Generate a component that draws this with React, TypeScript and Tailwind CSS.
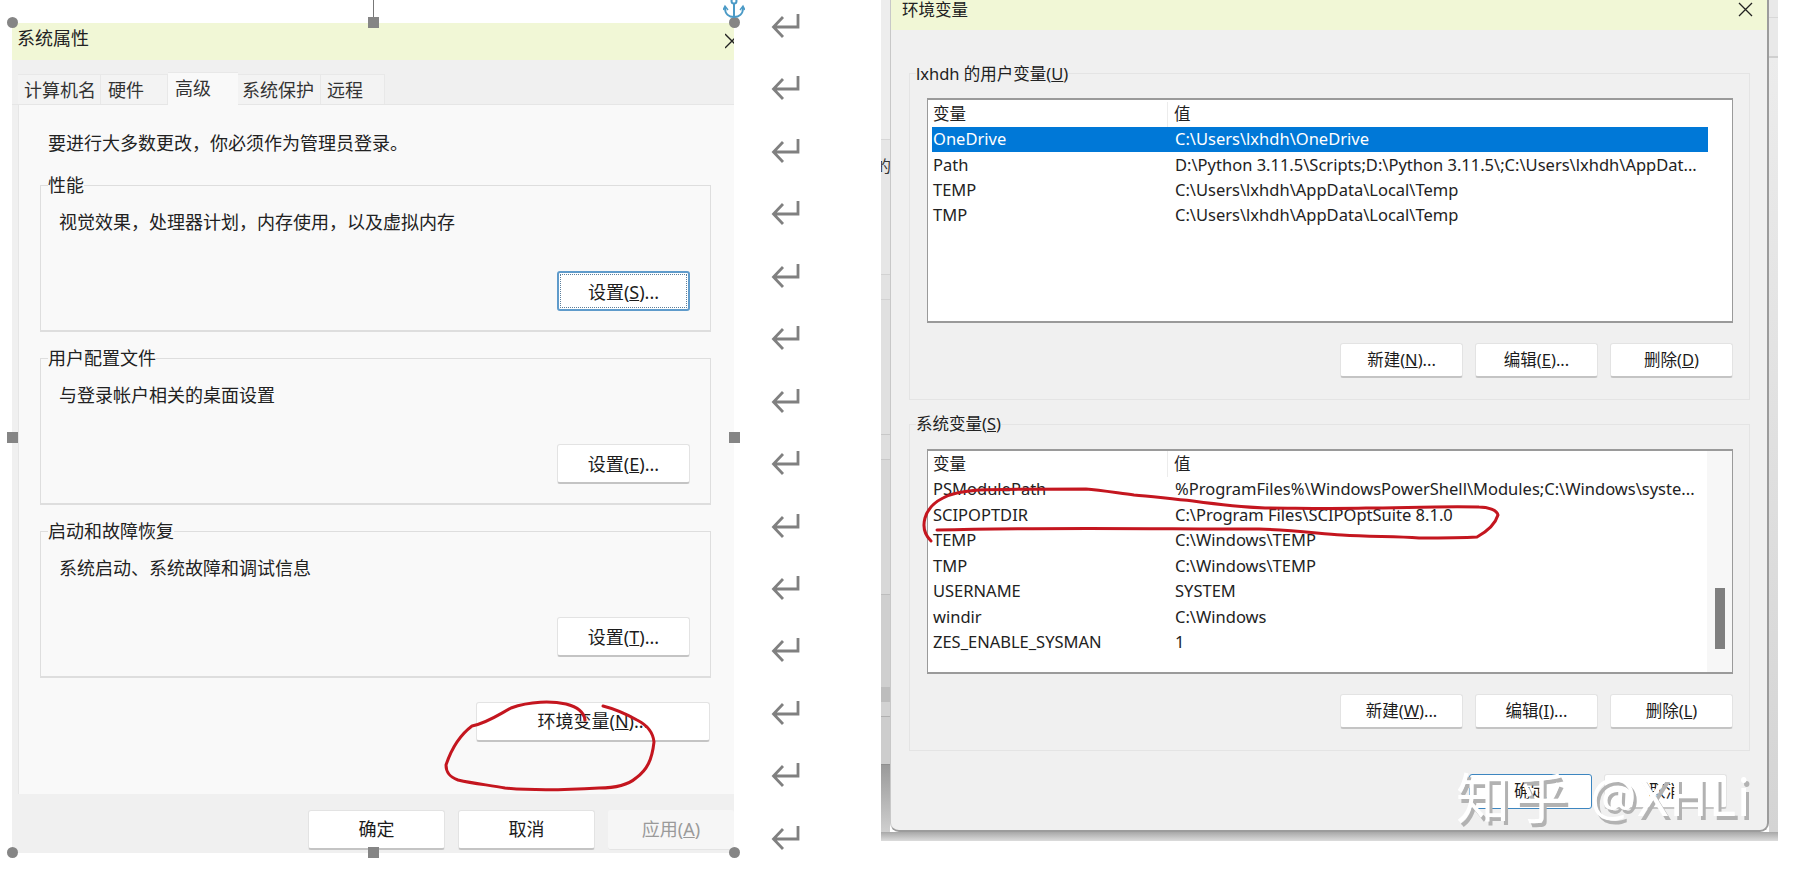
import React from "react";

const FONT = "font-['Noto_Sans','Noto_Sans_CJK_SC',sans-serif]";
const PLAIN_EDGE = "border border-[#e3e3e3] border-b-[#c4c4c4] border-b-2";

function Btn({ children, edge = PLAIN_EDGE, className = "" }: { children: React.ReactNode; edge?: string; className?: string }) {
  return (
    <div className={`flex items-center justify-center rounded-[3px] bg-white text-[#1c1c1c] ${edge} ${className}`}>
      <span>{children}</span>
    </div>
  );
}

function LeftGroup({ legend, desc, k, focus, className = "" }: { legend: string; desc: string; k: string; focus?: boolean; className?: string }) {
  return (
    <div className={`relative h-[147px] w-[671px] border border-[#dedede] border-b-2 flex flex-col justify-between pl-[18px] pr-[20px] pt-[24px] pb-[19px] ${className}`}>
      <span className="absolute left-[7px] top-[-13px] bg-[#f9f9f9] h-[24px] leading-[24px] text-[18px] text-[#222]">{legend}</span>
      <div className="leading-[24px] text-[#222]">{desc}</div>
      <Btn
        edge={focus ? "border-2 border-[#5f9bcb] outline-1 outline-dotted outline-[#5c7f9c] outline-offset-[-4px]" : PLAIN_EDGE}
        className="self-end w-[133px] h-[40px] pt-[2px]"
      >
        设置(<u>{k}</u>)...
      </Btn>
    </div>
  );
}

function Handle({ round, className }: { round?: boolean; className: string }) {
  return <div className={`absolute w-[11px] h-[11px] bg-[#858585] ${round ? "rounded-full" : ""} ${className}`} />;
}

function LeftDialog() {
  const tabs: [string, string, string][] = [
    ["计算机名", "w-[83px]", "pl-[6px]"],
    ["硬件", "w-[67px]", "pl-[7px]"],
  ];
  return (
    <div className="relative w-[722px] h-[830px] bg-[#f0f0f0] flex flex-col text-[18px]">
      <div className="h-[37px] bg-[#f1f7d6] flex items-center justify-between pl-[5px] shrink-0">
        <span className="text-[#222] leading-[24px] -mt-[7px]">系统属性</span>
        <svg width="9" height="16" viewBox="0 0 9 16" className="-mt-[2px]">
          <path d="M0 1 L14 15 M0 15 L14 1" stroke="#222" strokeWidth="1.4" fill="none" />
        </svg>
      </div>
      <div className="h-[45px] flex items-end pl-[6px] shrink-0 border-b border-[#e6e6e6]">
        {tabs.map(([t, w, p]) => (
          <div key={t} className={`${w} ${p} h-[30px] bg-[#f3f3f3] border-r border-t border-[#e8e8e8] flex items-center text-[#333] leading-none`}>{t}</div>
        ))}
        <div className="w-[70px] h-[33px] bg-[#f9f9f9] border-t border-[#e8e8e8] flex items-start pt-[3px] pl-[7px] -mb-[1px] text-[#333] leading-[24px]">高级</div>
        <div className="w-[83px] h-[30px] bg-[#f3f3f3] border-r border-t border-[#e8e8e8] flex items-center pl-[4px] text-[#333] leading-none">系统保护</div>
        <div className="w-[64px] h-[30px] bg-[#f3f3f3] border-r border-t border-[#e8e8e8] flex items-center pl-[6px] text-[#333] leading-none">远程</div>
      </div>
      <div className="ml-[6px] h-[689px] bg-[#f9f9f9] border-l border-[#e6e6e6] shrink-0 pl-[21px] flex flex-col">
        <div className="pl-[8px] pt-[26px] leading-[24px] text-[#222] mb-[30px]">{"要进行大多数更改\uFF0C你必须作为管理员登录。"}</div>
        <LeftGroup legend="性能" desc={"视觉效果\uFF0C处理器计划\uFF0C内存使用\uFF0C以及虚拟内存"} k="S" focus />
        <LeftGroup legend="用户配置文件" desc="与登录帐户相关的桌面设置" k="E" className="mt-[26px]" />
        <LeftGroup legend="启动和故障恢复" desc="系统启动、系统故障和调试信息" k="T" className="mt-[26px]" />
        <Btn className="ml-[436px] mt-[24px] w-[234px] h-[40px]">环境变量(<u>N</u>)...</Btn>
      </div>
      <div className="flex-1 flex pl-[296px] pt-[16px] gap-[13px] overflow-hidden">
        <Btn className="w-[137px] h-[40px]">确定</Btn>
        <Btn className="w-[137px] h-[40px]">取消</Btn>
        <div className="w-[126px] h-[40px] bg-[#f6f6f6] rounded-[3px] flex items-center justify-center text-[#9a9a9a] border-b border-[#e4e4e4]">应用(<u>A</u>)</div>
      </div>
      {/* selection handles of the pasted picture */}
      <div className="absolute left-[361px] top-[-23px] w-px h-[23px] bg-[#777]" />
      <Handle round className="left-[-5px] top-[-6px]" />
      <Handle className="left-[356px] top-[-6px]" />
      <Handle round className="left-[717px] top-[-6px]" />
      <Handle className="left-[-5px] top-[409px]" />
      <Handle className="left-[717px] top-[409px]" />
      <Handle round className="left-[-5px] top-[824px]" />
      <Handle className="left-[356px] top-[824px]" />
      <Handle round className="left-[717px] top-[824px]" />
      <svg width="22" height="20" viewBox="0 0 22 20" className="absolute left-[711px] top-[-23px]">
        <g stroke="#4b9ac6" strokeWidth="2" fill="none">
          <circle cx="11" cy="1" r="2.5" />
          <path d="M11 3 V17" />
          <path d="M2 8 C2 14 6 17 11 17 C16 17 20 14 20 8" />
          <path d="M0 10 L2 6 L5 10 M17 10 L20 6 L22 10" strokeWidth="1.4" />
        </g>
      </svg>
    </div>
  );
}

function ReturnArrow() {
  return (
    <svg width="29" height="24" viewBox="0 0 29 24" className="shrink-0">
      <path d="M27 0 V13 H3 M12 3 L2.5 13 L12 23" stroke="#808080" strokeWidth="2.8" fill="none" />
    </svg>
  );
}

type Row = [string, string];

function VarList({ rows, selected, scrollbar }: { rows: Row[]; selected?: number; scrollbar?: boolean }) {
  return (
    <div className="relative w-[806px] h-[225px] bg-white border border-[#9a9a9a] border-t-2 border-b-2 pl-[4px] overflow-hidden">
      <div className={`w-[776px] flex items-center text-[#222] ${scrollbar ? "h-[26px]" : "h-[27px] pt-[2px]"}`}>
        <div className="w-[236px] h-full border-r border-[#ececec] pl-[1px] flex items-center">变量</div>
        <div className="pl-[6px]">值</div>
      </div>
      {rows.map(([a, b], i) => (
        <div key={a} className={`w-[776px] flex items-center whitespace-nowrap ${scrollbar ? "h-[25.5px]" : "h-[25.3px]"} ${selected === i ? "bg-[#0078d7] text-white" : "text-[#222]"}`}>
          <div className="w-[236px] pl-[1px]">{a}</div>
          <div className="pl-[7px]">{b}</div>
        </div>
      ))}
      {scrollbar && (
        <div className="absolute right-0 top-0 bottom-0 w-[25px] bg-[#f7f7f7] pt-[137px] pl-[8px]">
          <div className="w-[10px] h-[61px] bg-[#7f7f7f]" />
        </div>
      )}
    </div>
  );
}

function RightGroup({ legend, rows, selected, scrollbar, labels, className = "" }: { legend: React.ReactNode; rows: Row[]; selected?: number; scrollbar?: boolean; labels: React.ReactNode[]; className?: string }) {
  return (
    <div className={`relative w-[841px] h-[327px] border border-[#e4e4e4] pl-[17px] pt-[24px] ${className}`}>
      <span className={`absolute left-[6px] bg-[#f0f0f0] h-[24px] leading-[24px] text-[#222] ${scrollbar ? "top-[-13px]" : "top-[-12px]"}`}>{legend}</span>
      <VarList rows={rows} selected={selected} scrollbar={scrollbar} />
      <div className="flex justify-end gap-[12px] pr-[16px] mt-[20px]">
        {labels.map((l, i) => (
          <Btn key={i} className="w-[123px] h-[35px]">{l}</Btn>
        ))}
      </div>
    </div>
  );
}

const USER: Row[] = [
  ["OneDrive", "C:\\Users\\lxhdh\\OneDrive"],
  ["Path", "D:\\Python 3.11.5\\Scripts;D:\\Python 3.11.5\\;C:\\Users\\lxhdh\\AppDat..."],
  ["TEMP", "C:\\Users\\lxhdh\\AppData\\Local\\Temp"],
  ["TMP", "C:\\Users\\lxhdh\\AppData\\Local\\Temp"],
];
const SYS: Row[] = [
  ["PSModulePath", "%ProgramFiles%\\WindowsPowerShell\\Modules;C:\\Windows\\syste..."],
  ["SCIPOPTDIR", "C:\\Program Files\\SCIPOptSuite 8.1.0"],
  ["TEMP", "C:\\Windows\\TEMP"],
  ["TMP", "C:\\Windows\\TEMP"],
  ["USERNAME", "SYSTEM"],
  ["windir", "C:\\Windows"],
  ["ZES_ENABLE_SYSMAN", "1"],
];

function RightDialog() {
  return (
    <div className="w-[897px] h-[841px] flex flex-col shrink-0 text-[16.5px]">
      <div className="flex h-[832px]">
        <div className="w-[9px] h-full bg-[#e2e2e2] flex flex-col">
          <div className="h-[140px] bg-[#ededed] border-b border-[#d6d6d6]" />
          <div className="h-[135px] bg-[#e6e6e6] border-b border-[#d2d2d2] relative overflow-hidden">
            <span className="absolute left-[-6px] top-[18px] text-[16px] leading-none text-[#333]">的</span>
          </div>
          <div className="h-[25px] bg-[#e2e2e2] border-b border-[#d2d2d2]" />
          <div className="h-[135px] bg-[#e0e0e0] border-b border-[#c8c8c8]" />
          <div className="h-[25px] bg-[#dedede] border-b border-[#c8c8c8]" />
          <div className="h-[135px] bg-[#d8d8d8] border-b border-[#bdbdbd]" />
          <div className="h-[92px] bg-[#cfcfcf]" />
          <div className="h-[15px] bg-[#bdbdbd]" />
          <div className="h-[15px] bg-[#d2d2d2] border-b border-[#b0b0b0]" />
          <div className="h-[48px] bg-[#cdcdcd] border-b border-[#8f8f8f]" />
          <div className="flex-1 bg-gradient-to-b from-[#9a9a9a] to-[#cfcfcf]" />
        </div>
        <div className="w-[879px] h-full bg-[#f0f0f0] rounded-bl-[9px] rounded-br-[9px] border-l border-r-2 border-b-2 border-l-[#c8c8c8] border-r-[#9c9c9c] border-b-[#9c9c9c] flex flex-col overflow-hidden">
          <div className="h-[30px] bg-[#f1f7d6] flex items-start justify-between pl-[11px] pr-[14px] shrink-0">
            <span className="text-[#222] leading-[18px] mt-[1px]">环境变量</span>
            <svg width="15" height="15" viewBox="0 0 15 15" className="mt-[2px]">
              <path d="M1 1 L14 14 M1 14 L14 1" stroke="#222" strokeWidth="1.3" fill="none" />
            </svg>
          </div>
          <div className="pl-[18px] pt-[43px] flex flex-col">
            <RightGroup
              legend={<>lxhdh 的用户变量(<u>U</u>)</>}
              rows={USER}
              selected={0}
              labels={[<>新建(<u>N</u>)...</>, <>编辑(<u>E</u>)...</>, <>删除(<u>D</u>)</>]}
            />
            <RightGroup
              legend={<>系统变量(<u>S</u>)</>}
              rows={SYS}
              scrollbar
              labels={[<>新建(<u>W</u>)...</>, <>编辑(<u>I</u>)...</>, <>删除(<u>L</u>)</>]}
              className="mt-[24px]"
            />
            <div className="flex justify-end gap-[12px] pr-[40px] mt-[23px]">
              <Btn edge="border border-[#3d86c0]" className="w-[123px] h-[35px]">确定</Btn>
              <Btn className="w-[123px] h-[35px]">取消</Btn>
            </div>
          </div>
        </div>
        <div className="w-[9px] h-full bg-[#e9e9e9] flex flex-col">
          <div className="h-[18px] border-b border-[#d8d8d8]" />
          <div className="h-[40px] border-b-2 border-[#cfcfcf]" />
          <div className="flex-1 bg-gradient-to-b from-[#ececec] to-[#d4d4d4]" />
        </div>
      </div>
      <div className="flex-1 bg-gradient-to-b from-[#a8a8a8] to-[#dcdcdc]" />
    </div>
  );
}

export default function App() {
  return (
    <div className={`relative w-[1794px] h-[873px] bg-white overflow-hidden flex text-[16px] ${FONT}`}>
      <div className="pl-[12px] pt-[23px] shrink-0">
        <LeftDialog />
      </div>
      <div className="ml-[37px] pt-[14px] flex flex-col gap-[38.45px] shrink-0">
        {Array.from({ length: 14 }).map((_, i) => (
          <ReturnArrow key={i} />
        ))}
      </div>
      <div className="ml-[81px]">
        <RightDialog />
      </div>

      <svg width="1794" height="873" viewBox="0 0 1794 873" className="absolute inset-0 pointer-events-none">
        <g fill="none" stroke="#c4161f" strokeWidth="3" strokeLinecap="round" strokeLinejoin="round">
          <path d="M585 720 C584 712 578 707 566 704 C552 701 530 701 511 708 C498 715 487 723 472 726 C460 735 451 750 446 765 C446 773 450 777 458 780 C475 784 490 785 505 788 C525 790 565 790 599 788 C615 788 628 785 636 778 C647 770 652 760 654 742 C653 732 647 725 637 720 C628 715 615 709 603 706" />
          <path d="M937 530 C1040 527 1160 529 1259 529 C1290 530 1315 533 1342 535 C1370 537 1395 536 1419 538 C1440 538 1460 538 1477 537 C1486 532 1495 525 1498 515 C1497 510 1488 507 1479 507 C1440 506 1400 508 1366 508 C1330 509 1295 508 1265 508 C1240 507 1215 504 1193 501 C1170 499 1150 496 1134 495 C1118 493 1100 490 1086 489 C1050 489 1010 489 979 490 C965 491 952 493 943 498 C933 503 927 511 925 518 C923 525 923 533 931 541" />
        </g>
      </svg>

      <div className="absolute left-[1456px] top-[766px] flex items-center whitespace-nowrap text-white text-[54px] leading-[60px] [text-shadow:3px_4px_0_#b2b2b2]">
        <span className="tracking-[4px] font-['Noto_Sans_CJK_SC',sans-serif]">知乎</span>
        <span className="ml-[18px] tracking-[1px] text-[52px]">@XHLi</span>
      </div>
    </div>
  );
}
